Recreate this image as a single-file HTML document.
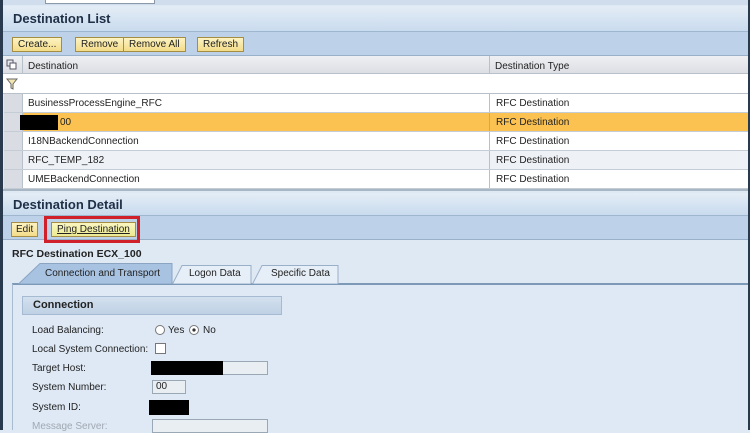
<!DOCTYPE html>
<html><head><meta charset="utf-8"><style>
*{margin:0;padding:0;box-sizing:border-box}
body{width:750px;height:430px;overflow:hidden;background:#dfe9f4;font-family:"Liberation Sans",Arial,sans-serif;font-size:10px;color:#222;position:relative}
.a{position:absolute}
.hdr{background:linear-gradient(#e4edf6,#c9dbee);border-bottom:1px solid #9fb6cf;font-weight:bold;font-size:13px;color:#1f2f45;padding-left:10px}
.tb{background:#bdd2e8;border-bottom:1px solid #98b0ca}
.btn{position:absolute;height:15px;background:linear-gradient(#fdf3c1,#f3dc8a);border:1px solid #a58d44;font-size:10px;line-height:13px;padding:0 5px;color:#222}
.row{position:absolute;left:4px;width:744px;height:19px;border-bottom:1px solid #c4ccd6;background:#fff}
.row .sel{position:absolute;left:0;top:0;width:19px;height:18px;background:#d9dde3;border-right:1px solid #b8c0ca}
.row .c1{position:absolute;left:24px;top:4px}
.row .c2{position:absolute;left:485px;top:0;height:18px;border-left:1px solid #b8c0ca;padding:4px 0 0 6px;width:260px}
.lbl{position:absolute;left:32px;font-size:10px;color:#222}
.inp{position:absolute;border:1px solid #9aa7b5;background:#e9eef3;height:14px}
</style></head><body>
<div class="a" style="left:0;top:0;width:3px;height:430px;background:#2a3a4e"></div>
<div class="a" style="left:748px;top:0;width:2px;height:430px;background:#2a3a4e"></div>
<div class="a" style="left:3px;top:0;width:745px;height:5px;background:#cfdded"></div>
<div class="a" style="left:45px;top:0;width:110px;height:4px;background:#fff;border:1px solid #8a9aab;border-top:none"></div>
<div class="a hdr" style="left:3px;top:6px;width:745px;height:26px;line-height:26px">Destination List</div>
<div class="a tb" style="left:3px;top:32px;width:745px;height:24px"></div>
<div class="btn" style="left:12px;top:37px">Create...</div>
<div class="btn" style="left:75px;top:37px">Remove</div>
<div class="btn" style="left:123px;top:37px">Remove All</div>
<div class="btn" style="left:197px;top:37px">Refresh</div>
<div class="a" style="left:3px;top:56px;width:745px;height:18px;background:linear-gradient(#eef0f3,#dcdfe4);border-bottom:1px solid #b8c0ca"></div>
<div class="a" style="left:22px;top:56px;width:1px;height:38px;background:#b8c0ca"></div>
<div class="a" style="left:489px;top:56px;width:1px;height:133px;background:#b8c0ca"></div>
<svg class="a" style="left:6px;top:59px" width="12" height="12"><rect x="1" y="1" width="6" height="6" fill="none" stroke="#556" /><rect x="4" y="4" width="6" height="6" fill="#fff" stroke="#556"/></svg>
<div class="a" style="left:28px;top:61px">Destination</div>
<div class="a" style="left:495px;top:61px">Destination Type</div>
<div class="a" style="left:3px;top:74px;width:745px;height:20px;background:#fff;border-bottom:1px solid #b8c0ca"></div>
<svg class="a" style="left:6px;top:78px" width="12" height="12"><path d="M1 1H11L7 6V11L5 10V6Z" fill="#f3e6b0" stroke="#666"/></svg>
<div class="row" style="top:94px"><div class="sel"></div><div class="c1">BusinessProcessEngine_RFC</div><div class="c2">RFC Destination</div></div>
<div class="row" style="top:113px;background:#fbc252"><div class="sel"></div><div class="a" style="left:16px;top:2px;width:38px;height:15px;background:#000"></div><div class="c1" style="left:56px">00</div><div class="c2" style="border-left-color:#e0a440">RFC Destination</div></div>
<div class="row" style="top:132px"><div class="sel"></div><div class="c1">I18NBackendConnection</div><div class="c2">RFC Destination</div></div>
<div class="row" style="top:151px;background:#eef1f6"><div class="sel"></div><div class="c1">RFC_TEMP_182</div><div class="c2">RFC Destination</div></div>
<div class="row" style="top:170px"><div class="sel"></div><div class="c1">UMEBackendConnection</div><div class="c2">RFC Destination</div></div>
<div class="a" style="left:3px;top:189px;width:745px;height:2px;background:#a9b6c4"></div>
<div class="a hdr" style="left:3px;top:193px;width:745px;height:23px;line-height:23px">Destination Detail</div>
<div class="a tb" style="left:3px;top:216px;width:745px;height:24px"></div>
<div class="btn" style="left:11px;top:222px;padding:0 4px">Edit</div>
<div class="a" style="left:44px;top:216px;width:96px;height:27px;border:3px solid #d0202a"></div>
<div class="btn" style="left:51px;top:222px;background:linear-gradient(#fbf6c0,#ecea92);text-decoration:underline">Ping Destination</div>
<div class="a" style="left:12px;top:248px;font-weight:bold;font-size:10.5px">RFC Destination ECX_100</div>
<div class="a" style="left:12px;top:283px;width:736px;height:147px;background:#dee9f5;border-top:2px solid #7d99b8;border-left:1px solid #a8bbd0"></div>
<svg class="a" style="left:18px;top:262px" width="330" height="22">
<path d="M0.5 22L22 1.5H154V22Z" fill="#a8c3e2" stroke="#8aa4c2"/>
<path d="M154.5 22L164 3.5H233V22Z" fill="#e6eef7" stroke="#9ab0c8"/>
<path d="M234.5 22L244 3.5H320V22Z" fill="#e6eef7" stroke="#9ab0c8"/>
</svg>
<div class="a" style="left:45px;top:268px;font-size:10px">Connection and Transport</div>
<div class="a" style="left:189px;top:268px">Logon Data</div>
<div class="a" style="left:271px;top:268px">Specific Data</div>
<div class="a" style="left:22px;top:296px;width:260px;height:19px;background:linear-gradient(#d3e0ee,#bfd1e5);border:1px solid #a6bbd2;font-weight:bold;font-size:11px;line-height:17px;padding-left:10px">Connection</div>
<div class="lbl" style="top:325px">Load Balancing:</div>
<svg class="a" style="left:154px;top:324px" width="60" height="12"><circle cx="6" cy="6" r="4.5" fill="#fff" stroke="#777"/><circle cx="40" cy="6" r="4.5" fill="#fff" stroke="#777"/><circle cx="40" cy="6" r="1.6" fill="#333"/></svg>
<div class="a" style="left:168px;top:325px">Yes</div>
<div class="a" style="left:203px;top:325px">No</div>
<div class="lbl" style="top:344px">Local System Connection:</div>
<div class="a" style="left:155px;top:343px;width:11px;height:11px;border:1px solid #777;background:#fff"></div>
<div class="lbl" style="top:363px">Target Host:</div>
<div class="inp" style="left:151px;top:361px;width:117px"></div>
<div class="a" style="left:151px;top:361px;width:72px;height:14px;background:#000"></div>
<div class="lbl" style="top:382px">System Number:</div>
<div class="inp" style="left:152px;top:380px;width:34px;padding-left:3px;font-size:10px;line-height:12px">00</div>
<div class="lbl" style="top:402px">System ID:</div>
<div class="a" style="left:149px;top:400px;width:40px;height:15px;background:#000"></div>
<div class="lbl" style="top:421px;color:#a0a8b2">Message Server:</div>
<div class="inp" style="left:152px;top:419px;width:116px"></div>
</body></html>
